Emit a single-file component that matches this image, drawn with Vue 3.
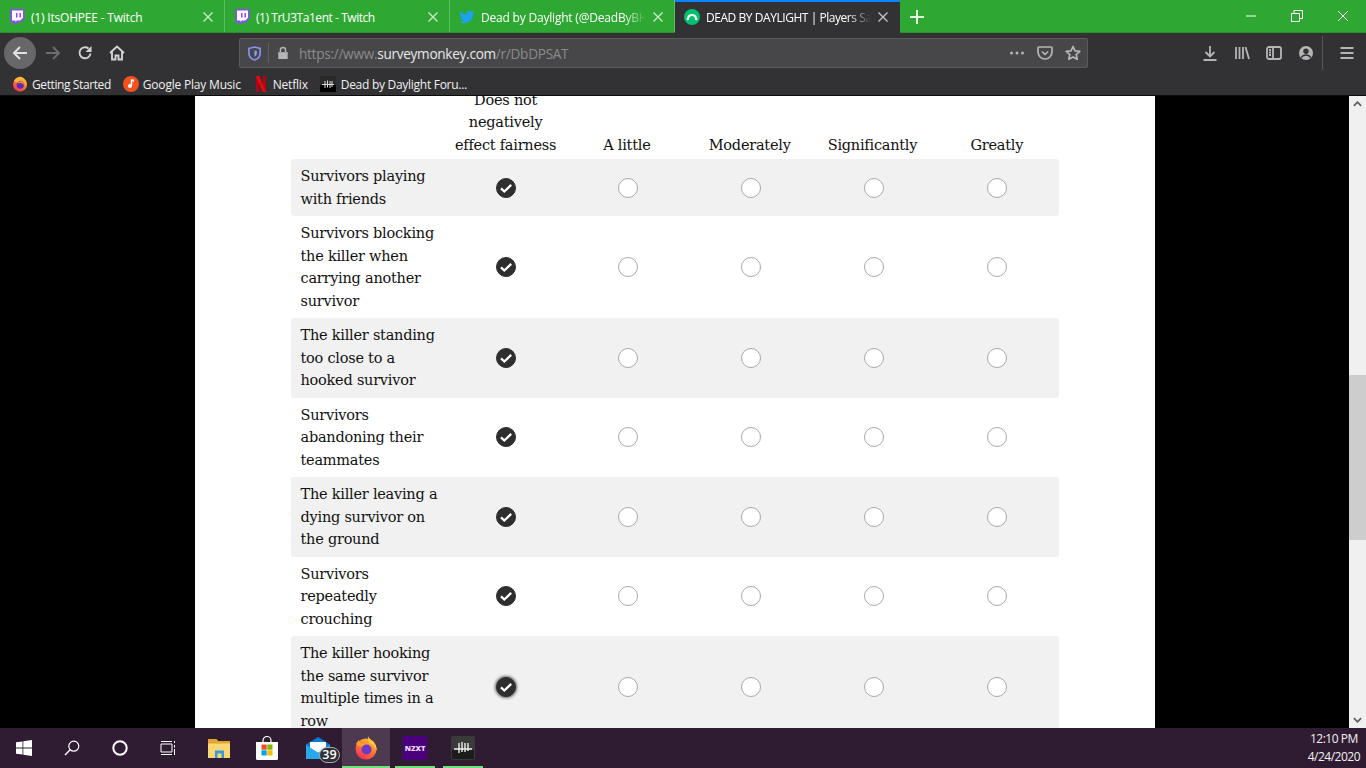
<script setup>
const tabs = [
  { title: '(1) ItsOHPEE - Twitch', icon: 'twitch' },
  { title: '(1) TrU3Ta1ent - Twitch', icon: 'twitch', tight: true },
  { title: 'Dead by Daylight (@DeadByBHVR) / Twitter', icon: 'twitter', fade: true },
  { title: 'DEAD BY DAYLIGHT | Players Satisfaction Survey', icon: 'sm', fade: true, active: true, tight: true }
]
const headers = [['Does not', 'negatively', 'effect fairness'], ['A little'], ['Moderately'], ['Significantly'], ['Greatly']]
const rows = [
  ['Survivors playing', 'with friends'],
  ['Survivors blocking', 'the killer when', 'carrying another', 'survivor'],
  ['The killer standing', 'too close to a', 'hooked survivor'],
  ['Survivors', 'abandoning their', 'teammates'],
  ['The killer leaving a', 'dying survivor on', 'the ground'],
  ['Survivors', 'repeatedly', 'crouching'],
  ['The killer hooking', 'the same survivor', 'multiple times in a', 'row']
]
</script>

<template>
  <div class="screen">
    <svg class="defs" width="0" height="0">
      <defs>
        <linearGradient id="ffg" x1="0.800" y1="0" x2="0.200" y2="1">
          <stop offset="0" stop-color="#ffc93a" />
          <stop offset="0.450" stop-color="#ff7a2e" />
          <stop offset="1" stop-color="#f5265e" />
        </linearGradient>
      </defs>
    </svg>
    <header class="tabstrip">
      <div v-for="t in tabs" :key="t.title" class="tab" :class="{ active: t.active }">
        <svg v-if="t.icon === 'twitch'" class="fav" viewBox="0 0 16 16">
          <path d="M1.500 0h14v9.500l-4 4H8.500L5.500 16v-2.500h-4z" fill="#9146ff" />
          <path d="M3 1.500h11v7.300l-2.800 2.800H8L6.500 13v-1.400H3z" fill="#fff" />
          <path d="M7 4h1.500v4.500H7zM10.500 4H12v4.500h-1.500z" fill="#9146ff" />
        </svg>
        <svg v-else-if="t.icon === 'twitter'" class="fav" viewBox="0 0 16 16">
          <path d="M15.500 3.200c-.6.300-1.200.4-1.800.5.600-.4 1.100-1 1.300-1.700-.6.400-1.300.6-2 .8A3.100 3.100 0 0 0 7.700 5.600 8.800 8.800 0 0 1 1.300 2.400a3.100 3.100 0 0 0 1 4.100c-.5 0-1-.2-1.400-.4 0 1.500 1.100 2.800 2.500 3.100-.5.100-.9.100-1.400 0 .4 1.200 1.500 2.100 2.900 2.200A6.200 6.200 0 0 1 .3 12.700 8.800 8.800 0 0 0 14 4.900c.6-.4 1.100-1 1.500-1.700z" fill="#1da1f2" />
        </svg>
        <svg v-else class="fav" viewBox="0 0 16 16">
          <circle cx="8" cy="8" r="8" fill="#00bf6f" />
          <path d="M3 9.500a5 4.500 0 0 1 10 0h-2.300a2.700 2.500 0 0 0-5.400 0z" fill="#fff" />
          <circle cx="3.800" cy="10" r="1.300" fill="#fff" />
          <circle cx="12.200" cy="10" r="1.300" fill="#fff" />
        </svg>
        <span class="tab-title" :class="{ fade: t.fade, tight: t.tight }">{{ t.title }}</span>
        <svg class="tab-x" viewBox="0 0 12 12"><path d="M1.500 1.500l9 9M10.500 1.500l-9 9" /></svg>
      </div>
      <div class="newtab"><svg viewBox="0 0 16 16"><path d="M8 1v14M1 8h14" /></svg></div>
      <div class="winctl">
        <svg viewBox="0 0 12 12"><path d="M1 6h10" /></svg>
        <svg viewBox="0 0 12 12"><path d="M.5 3.500h8v8h-8zM3 3.500V.5h8.500v8h-3" /></svg>
        <svg viewBox="0 0 12 12"><path d="M1 1l10 10M11 1L1 11" /></svg>
      </div>
    </header>

    <nav class="navbar">
      <button class="back"><svg viewBox="0 0 16 16"><path d="M15 8H2M8 2L2 8l6 6" /></svg></button>
      <button class="dim"><svg viewBox="0 0 16 16"><path d="M1 8h13M8 2l6 6-6 6" /></svg></button>
      <button><svg viewBox="0 0 16 16"><path d="M13.500 8.500A5.500 5.500 0 1 1 11.500 3.500" /><path class="solid" d="M14.500 1v6h-6z" /></svg></button>
      <button><svg viewBox="0 0 16 16"><path d="M1 8l7-6.500L15 8M3 7v7.500h3.500v-4h3v4H13V7" /></svg></button>
      <div class="urlbar">
        <svg class="shield" viewBox="0 0 14 16"><path d="M7 1l6 1.500V8c0 3.500-3 6-6 7-3-1-6-3.500-6-7V2.500z" fill="none" stroke="#8c8ef5" stroke-width="1.800" /><path d="M7 4.500l2.500.7V8c0 1.500-1.200 2.800-2.500 3.400z" fill="#7fa8f5" /></svg>
        <i class="url-sep"></i>
        <svg class="lock" viewBox="0 0 14 16"><path d="M1.500 7h11v8h-11z" fill="#b5b5b6" /><path d="M4 7V4.500a3 3 0 0 1 6 0V7" fill="none" stroke="#b5b5b6" stroke-width="1.700" /></svg>
        <span class="url"><span class="dimtext">https://www.</span><span class="domain">surveymonkey.com</span><span class="dimtext">/r/DbDPSAT</span></span>
        <svg class="urlic dots" viewBox="0 0 16 16"><circle cx="2.500" cy="8" r="1.500" /><circle cx="8" cy="8" r="1.500" /><circle cx="13.500" cy="8" r="1.500" /></svg>
        <svg class="urlic line" viewBox="0 0 16 16"><path d="M1.800 2h12.400c.5 0 .8.300.8.800V7c0 4-3.200 7-7 7s-7-3-7-7V2.800c0-.5.300-.8.800-.8z" /><path d="M5 6.500l3 3 3-3" /></svg>
        <svg class="urlic line" viewBox="0 0 16 16"><path d="M8 1.500l2 4.400 4.800.5-3.600 3.200 1 4.700L8 11.900l-4.200 2.400 1-4.700L1.200 6.400 6 5.900z" /></svg>
      </div>
      <div class="tools">
        <svg viewBox="0 0 16 16"><path d="M8 1v10M3.500 7L8 11.500 12.500 7M1.500 15h13" /></svg>
        <svg viewBox="0 0 16 16"><path d="M2 2v12M5.500 2v12M9 2v12M11.500 2l3.500 12" /></svg>
        <svg viewBox="0 0 16 16"><rect x="1" y="2" width="14" height="12" rx="2" /><path d="M7 2v12M3 5h2M3 7.500h2M3 10h2" /></svg>
        <svg viewBox="0 0 16 16"><circle cx="8" cy="8" r="7" class="solid" /><circle cx="8" cy="6.200" r="2.700" class="cut" /><path d="M3.300 12.600c1-1.800 2.700-2.700 4.700-2.700s3.700.9 4.700 2.700" class="cutline" /></svg>
        <i class="tool-sep"></i>
        <svg viewBox="0 0 16 16"><path d="M1.500 3h13M1.500 8h13M1.500 13h13" /></svg>
      </div>
    </nav>

    <div class="bookmarks">
      <span class="bm first">
        <svg viewBox="0 0 24 24"><circle cx="12" cy="13" r="10.500" fill="url(#ffg)" /><path d="M3 7c2-4 6-6 10-6 5 1 9 6 9 11-2-4-5-6-8-6-2 1-3 4-6 3-2 0-4-1-5-2z" fill="#ffb53a" /><circle cx="12.500" cy="13.500" r="5.500" fill="#5b2bb5" /><path d="M6 9c3 1 6 0 8-1 3 1 4 3 4 6-2-3-5-4-7-3-2 0-4-1-5-2z" fill="#ff8a2a" /></svg>
        Getting Started
      </span>
      <span class="bm">
        <svg viewBox="0 0 16 16"><circle cx="8" cy="8" r="8" fill="#f4511e" /><path d="M8.500 3.500v6" stroke="#fff" stroke-width="1.500" /><path d="M8.500 3.500h2.500v2H8.500z" fill="#fff" /><circle cx="7" cy="10" r="2" fill="#fff" /></svg>
        Google Play Music
      </span>
      <span class="bm">
        <svg viewBox="0 0 16 16"><rect x="3" y="0" width="3.300" height="16" fill="#b1060f" /><rect x="9.700" y="0" width="3.300" height="16" fill="#b1060f" /><polygon points="3,0 6.300,0 13,16 9.700,16" fill="#e50914" /></svg>
        Netflix
      </span>
      <span class="bm last">
        <svg viewBox="0 0 16 16"><rect width="16" height="16" fill="#2a2a2a" /><rect y="9" width="16" height="7" fill="#000" /><path d="M2 8.500h12M5 5v7M7.500 4.500v7M10 5v7M12 5v6" stroke="#ddd" stroke-width="1" /></svg>
        Dead by Daylight Foru...
      </span>
    </div>

    <main class="viewport">
      <section class="page">
        <div class="survey">
          <div class="grid head">
            <div></div>
            <div v-for="h in headers" :key="h[0]" class="hcell"><div v-for="l in h" :key="l">{{ l }}</div></div>
          </div>
          <div v-for="(r, i) in rows" :key="r[0]" class="grid row" :class="{ odd: i % 2 === 0 }">
            <div class="label"><div v-for="l in r" :key="l">{{ l }}</div></div>
            <div v-for="c in 5" :key="c" class="cell">
              <span v-if="c === 1" class="radio on" :class="{ focus: i === 6 }">
                <svg viewBox="0 0 20 20"><path d="M5 10.400l3.300 3.100 6.900-6.600" /></svg>
              </span>
              <span v-else class="radio"></span>
            </div>
          </div>
        </div>
      </section>
      <aside class="scrollbar">
        <svg viewBox="0 0 10 6"><path d="M1 5l4-4 4 4" /></svg>
        <div class="track"><div class="thumb"></div></div>
        <svg viewBox="0 0 10 6"><path d="M1 1l4 4 4-4" /></svg>
      </aside>
    </main>

    <footer class="taskbar">
      <div class="tb"><svg viewBox="0 0 16 16"><path d="M0 2.300l6.500-.9v6.200H0zM7.300 1.300L16 0v7.600H7.300zM0 8.400h6.500v6.200L0 13.700zM7.300 8.400H16V16l-8.700-1.200z" fill="#fff" /></svg></div>
      <div class="tb"><svg viewBox="0 0 16 16"><circle cx="9.800" cy="6.200" r="5" fill="none" stroke="#fff" stroke-width="1.200" /><path d="M6.200 9.800L1 15" stroke="#fff" stroke-width="1.400" /></svg></div>
      <div class="tb"><svg viewBox="0 0 16 16"><circle cx="8" cy="8" r="6.700" fill="none" stroke="#fff" stroke-width="2" /></svg></div>
      <div class="tb"><svg viewBox="0 0 16 16"><path d="M1 4h11v8H1zM1 1.500h11M1 14.500h11M14.500 1v2M14.500 5v2.500M14.500 9v6" fill="none" stroke="#fff" stroke-width="1" /></svg></div>
      <div class="tb shift3"><svg class="big" viewBox="0 0 24 24"><path d="M1 3h8l2 2h12v17H1z" fill="#f8d775" /><path d="M1 3h8l2 2H23v2.500H1z" fill="#e0a62e" /><path d="M8 22v-7.500h9V22h-2.500v-4.500h-4V22z" fill="#3a9ad9" /></svg></div>
      <div class="tb"><svg class="big" viewBox="0 0 24 24"><path d="M8 7V4.500a4 4 0 0 1 8 0V7" fill="none" stroke="#fff" stroke-width="1.200" /><path d="M1 6h22v16.500a1.500 1.500 0 0 1-1.500 1.500h-19A1.500 1.500 0 0 1 1 22.500z" fill="#fff" /><rect x="6.500" y="8.500" width="5.200" height="5.200" fill="#f25022" /><rect x="12.300" y="8.500" width="5.200" height="5.200" fill="#7fba00" /><rect x="6.500" y="14.300" width="5.200" height="5.200" fill="#00a4ef" /><rect x="12.300" y="14.300" width="5.200" height="5.200" fill="#ffb900" /></svg></div>
      <div class="tb shift3 mail">
        <svg class="big" viewBox="0 0 24 24"><path d="M0 8.500L12 1l12 7.500V23H0z" fill="#0f78d4" /><path d="M4 6h16v9l-8 4-8-4z" fill="#fff" /><path d="M0 9l12 7.500L24 9v14H0z" fill="#29a8ea" /></svg>
        <span class="badge">39</span>
      </div>
      <div class="tb running active"><svg class="big" viewBox="0 0 24 24"><circle cx="12" cy="13" r="10.500" fill="url(#ffg)" /><path d="M14 0c1 3 4 4 6 7 2 2.500 3 5 2.500 8-1-4-4-7-7-7.500-1-2-1.500-5-1.500-7.500z" fill="#ffc93a" /><path d="M2 8c1-2 2-3 3-4 0 2 1 3 3 3.500 2-.5 4-.5 6 .5-2 .5-3 2-5 2.500C6 11 3.500 10 2 8z" fill="#ff9d2e" /><circle cx="12.500" cy="13.500" r="5" fill="#6b3bc8" /></svg></div>
      <div class="tb running shift1"><span class="nzxt">NZXT</span></div>
      <div class="tb running"><svg class="big" viewBox="0 0 24 24"><rect width="24" height="24" rx="2" fill="#3a3a3a" /><rect x="1" y="14" width="22" height="9" fill="#1c1c1c" /><path d="M3 13h18M8 7v10M11 6v10M14 7v9M17 7v8" stroke="#eee" stroke-width="1.400" /></svg></div>
      <div class="clock"><div>12:10 PM</div><div>4/24/2020</div></div>
    </footer>
  </div>
</template>

<style>
html, body { margin: 0; background: #000; overflow: hidden; }
</style>

<style scoped>
.screen { width: 1366px; height: 768px; display: flex; flex-direction: column; overflow: hidden; font-family: "Open Sans", "Noto Sans", sans-serif; font-size: 12px; color: #fff; }
.defs { position: absolute; }

.tabstrip { height: 33px; box-sizing: border-box; background: #2fa833; border-bottom: 1px solid #27912b; display: flex; flex: none; }
.tab { width: 225px; height: 32px; box-sizing: border-box; display: flex; align-items: center; padding: 2px 0 0 9px; border-right: 1px solid #5cbc5f; }
.tab.active { background: #323234; border-top: 2px solid #0a84ff; border-right: 0; height: 33px; padding: 0 0 1px 9px; }
.fav { width: 16px; height: 16px; flex: none; }
.tab-title { margin-left: 6px; width: 167px; white-space: nowrap; overflow: hidden; letter-spacing: -.2px; }
.tab-title.tight { letter-spacing: -.45px; }
.tab-title.fade { mask-image: linear-gradient(to right, #000 85%, transparent 99%); }
.tab-x { width: 12px; height: 12px; margin-left: 4px; flex: none; fill: none; stroke: #cfe9d0; stroke-width: 1.300; }
.tab.active .tab-x { stroke: #c8c8c9; }
.newtab { width: 33px; display: flex; align-items: center; justify-content: center; height: 32px; padding-top: 2px; box-sizing: border-box; }
.newtab svg { width: 16px; height: 16px; fill: none; stroke: #e6f5e6; stroke-width: 2; }
.winctl { margin-left: auto; display: flex; height: 32px; align-items: center; }
.winctl svg { width: 12px; height: 12px; margin: 0 17px; fill: none; stroke: #fff; stroke-width: 1; overflow: visible; }

.navbar { height: 40px; flex: none; background: #323234; display: flex; align-items: center; padding-left: 4px; box-sizing: border-box; }
button { width: 32px; height: 32px; border: 0; padding: 0; background: none; border-radius: 50%; display: flex; align-items: center; justify-content: center; flex: none; }
button.dim { margin-left: 1px; }
button svg { width: 16px; height: 16px; fill: none; stroke: #d3d3d4; stroke-width: 1.900; }
button .solid { fill: #d3d3d4; stroke: none; }
.back { background: #68686a; }
.back svg { stroke: #e2e2e3; stroke-width: 2; }
.dim svg { stroke: #6d6d6f; }
.urlbar { margin-left: 106px; width: 849px; height: 30px; flex: none; box-sizing: border-box; background: #474749; border: 1px solid #5b5b5d; border-radius: 2px; display: flex; align-items: center; padding-left: 5px; }
.shield { width: 13px; height: 15px; margin-left: 3px; flex: none; }
.url-sep { width: 1px; height: 20px; background: #606062; margin-left: 7px; flex: none; }
.lock { width: 12px; height: 14px; margin-left: 8px; flex: none; }
.url { margin-left: 10px; font-size: 13.600px; letter-spacing: -.28px; white-space: nowrap; flex: 1; }
.dimtext { color: #8b8b8c; }
.domain { color: #e8e8e8; }
.urlic { width: 16px; height: 16px; margin-right: 12px; flex: none; }
.urlic.dots { fill: #b5b5b6; }
.urlic.line { fill: none; stroke: #b5b5b6; stroke-width: 1.700; stroke-linejoin: round; }
.urlic:last-child { margin-right: 6px; }
.tools { display: flex; align-items: center; margin-left: 114px; }
.tools svg { width: 16px; height: 16px; margin-right: 16px; fill: none; stroke: #b5b5b6; stroke-width: 1.800; flex: none; }
.tools .solid { fill: #b5b5b6; stroke: none; }
.tools .cut { fill: #323234; stroke: none; }
.tools .cutline { stroke: #323234; stroke-width: 1.500; }
.tool-sep { width: 1px; height: 34px; background: #58585a; margin: 0 16px 0 -8px; flex: none; }

.bookmarks { height: 23px; flex: none; background: #323234; border-bottom: 1px solid #0c0c0d; display: flex; align-items: center; padding-left: 12px; box-sizing: border-box; }
.bm { display: flex; align-items: center; gap: 4px; margin-right: 12px; color: #f0f0f0; letter-spacing: -.2px; white-space: nowrap; }
.bm.first { letter-spacing: -.4px; }
.bm.last { gap: 5px; letter-spacing: -.28px; }
.bm svg { width: 16px; height: 16px; flex: none; }

.viewport { flex: 1; min-height: 0; background: #000; display: flex; overflow: hidden; }
.page { margin-left: 195px; width: 960px; background: #fff; flex: none; overflow: hidden; }
.survey { margin: -7.250px 0 0 96px; width: 768px; font-family: "DejaVu Serif", serif; font-size: 14.500px; line-height: 22.500px; letter-spacing: -.24px; color: #111; }
.grid { display: grid; grid-template-columns: 153.200px repeat(5, 122.800px); }
.head { align-items: end; padding-bottom: 2.750px; }
.hcell { text-align: center; }
.hcell:nth-child(3), .hcell:nth-child(4), .hcell:nth-child(5) { padding-right: 3px; }
.row { align-items: center; padding: 6px 0; border-radius: 3px; }
.row.odd { background: #f1f1f1; }
.label { padding-left: 9.500px; white-space: nowrap; }
.cell { display: flex; justify-content: center; }
.radio { width: 20px; height: 20px; box-sizing: border-box; border: 1px solid #a9a9a9; border-radius: 50%; background: #fff; display: block; }
.radio.on { background: #2e2e2e; border-color: #2e2e2e; position: relative; }
.radio.on svg { position: absolute; inset: -1px; width: 20px; height: 20px; fill: none; stroke: #fff; stroke-width: 2.300; }
.radio.focus { box-shadow: 0 0 3px 1px #666; }

.scrollbar { margin-left: auto; width: 17px; background: #f0f0f0; display: flex; flex-direction: column; align-items: center; flex: none; }
.scrollbar svg { width: 9px; height: 6px; margin: 5px 0; flex: none; fill: none; stroke: #606060; stroke-width: 2; }
.track { flex: 1; width: 100%; padding-top: 263px; box-sizing: border-box; }
.thumb { height: 165px; background: #cdcdcd; }

.taskbar { height: 40px; flex: none; background: #2f1c33; display: flex; align-items: stretch; }
.tb { width: 48px; display: flex; align-items: center; justify-content: center; box-sizing: border-box; position: relative; flex: none; }
.tb svg { width: 16px; height: 16px; }
.tb svg.big { width: 24px; height: 24px; }
.shift3 { margin-left: 3px; }
.shift1 { margin-left: 1px; }
.running { background-image: linear-gradient(#6fe07a, #6fe07a); background-size: 40px 2px; background-repeat: no-repeat; background-position: center bottom; }
.active { background-color: #4d3a50; background-size: 100% 2px; }
.badge { position: absolute; right: 2px; bottom: 5px; width: 21px; height: 16px; border-radius: 10px; background: #2f3138; border: 1px solid #aaa; box-sizing: border-box; font-size: 12.500px; line-height: 13px; text-align: center; font-weight: 600; }
.nzxt { width: 24px; height: 24px; background: #4b007f; color: #e8dcf0; font-size: 7.500px; font-weight: 800; display: flex; align-items: center; justify-content: center; }
.clock { margin-left: auto; padding: 2px 6px 0 0; text-align: center; line-height: 18px; font-size: 12px; color: #f2f2f2; letter-spacing: -.5px; }
</style>
